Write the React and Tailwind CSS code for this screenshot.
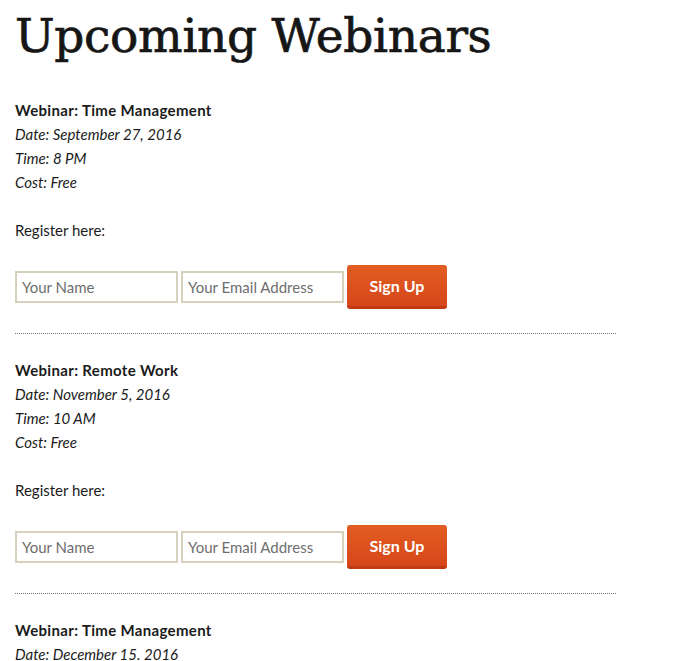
import React from 'react'

const WEBINARS = [
  { title: 'Time Management', date: 'September 27, 2016', time: '8 PM', cost: 'Free' },
  { title: 'Remote Work', date: 'November 5, 2016', time: '10 AM', cost: 'Free' },
  { title: 'Time Management', date: 'December 15. 2016', time: '7 PM', cost: 'Free' },
]

const body = { fontFamily: '"Source Sans Pro", Lato, "Open Sans", sans-serif' }

function Webinar({ title, date, time, cost, last }) {
  return (
    <section>
      <div className="leading-6">
        <p className="font-bold tracking-[0.33px]">Webinar: {title}</p>
        <p className="italic">Date: {date}</p>
        <p className="italic">Time: {time}</p>
        <p className="italic">Cost: {cost}</p>
      </div>
      <p className="mt-6 leading-6">Register here:</p>
      <form className="mt-[23px] flex items-center gap-[3px]" onSubmit={e => e.preventDefault()}>
        <input
          placeholder="Your Name"
          className="w-[163px] h-8 border-2 border-[#d6d1bd] px-[5px] text-[15px] text-[#333] placeholder:text-[#6e6e6e] outline-none"
          style={body}
        />
        <input
          placeholder="Your Email Address"
          className="w-[163px] h-8 border-2 border-[#d6d1bd] px-[5px] text-[15px] text-[#333] placeholder:text-[#6e6e6e] outline-none"
          style={body}
        />
        <button
          className="w-[100px] h-11 rounded-[3px] bg-gradient-to-b from-[#e25d22] to-[#d6461a] border-b-[3px] border-[#c23a12] text-white font-bold text-[16px]"
          style={body}
        >
          Sign Up
        </button>
      </form>
      {!last && <div className="mt-6 mb-6 w-[601px] border-t border-dotted border-[#777]" />}
    </section>
  )
}

export default function App() {
  return (
    <div className="min-h-screen bg-white px-[15px] text-[15px] text-[#1b1b1b]" style={body}>
      <h1
        className="pt-[6px] text-[47px] leading-[60px] text-[#161616] tracking-[-0.3px] [-webkit-text-stroke:0.7px_#161616]"
        style={{ fontFamily: '"DejaVu Serif", "Liberation Serif", serif' }}
      >
        Upcoming Webinars
      </h1>
      <div className="mt-[32px]">
        {WEBINARS.map((w, i) => (
          <Webinar key={i} {...w} last={i === WEBINARS.length - 1} />
        ))}
      </div>
    </div>
  )
}
